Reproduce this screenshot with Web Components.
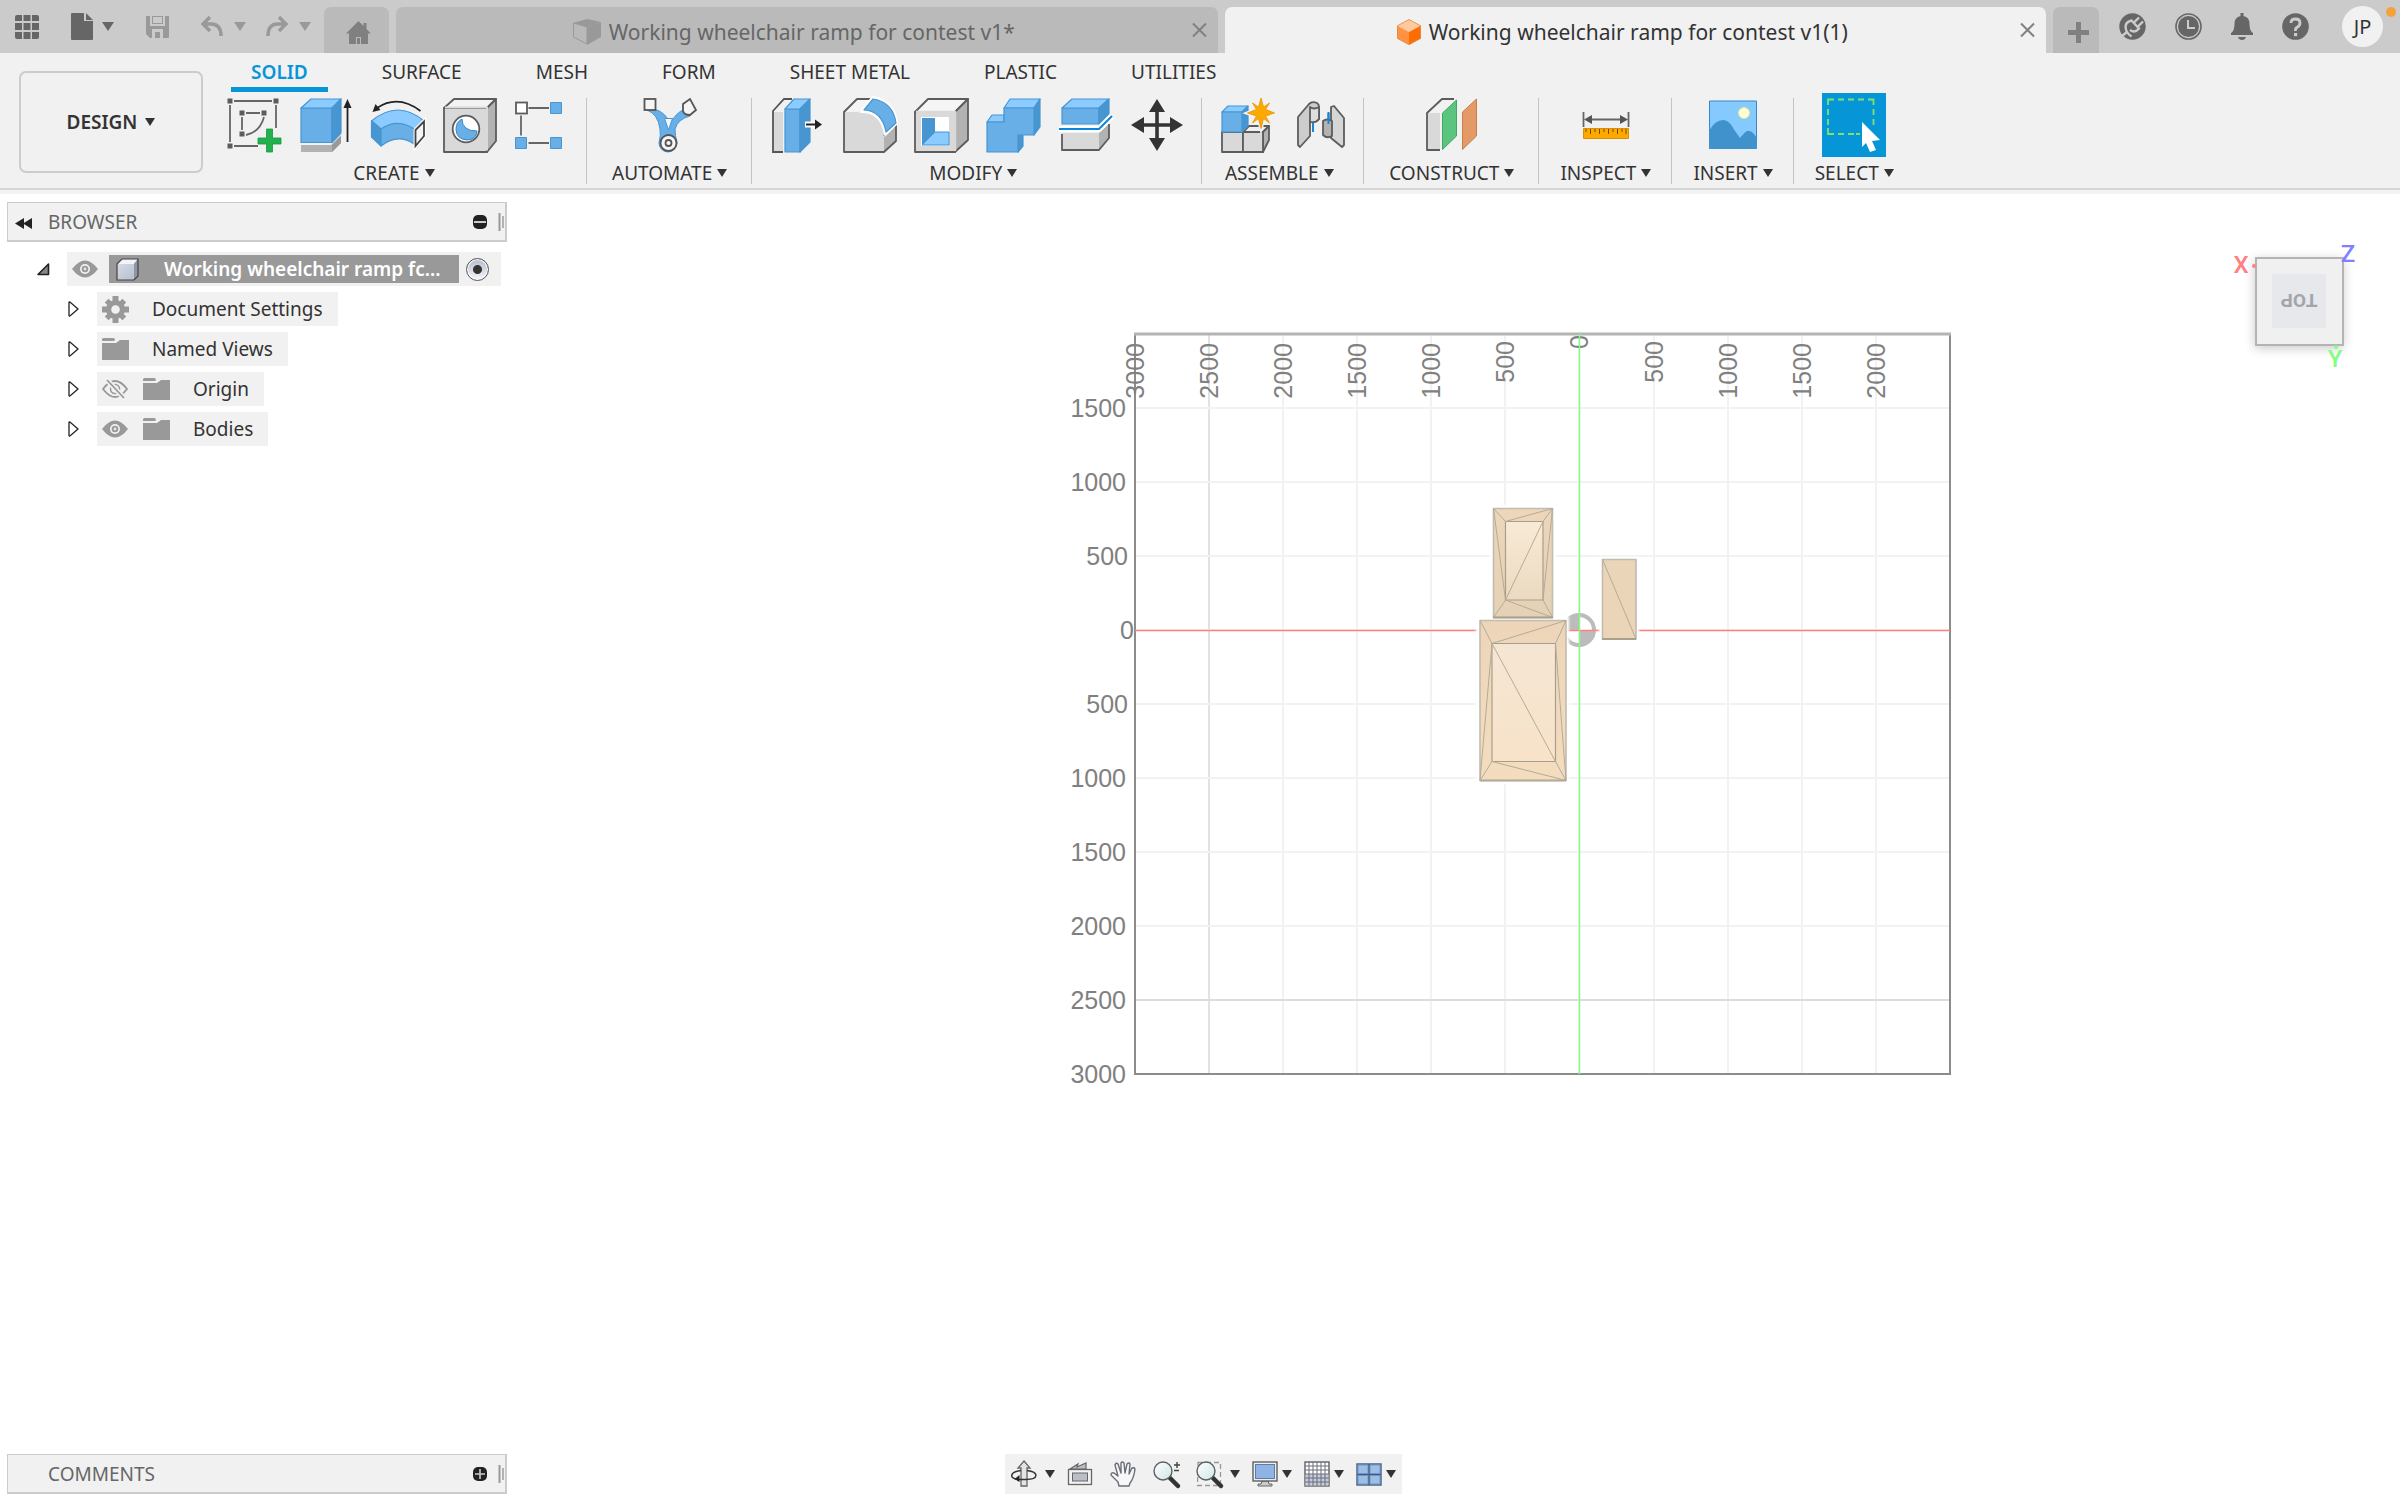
<!DOCTYPE html>
<html lang="en">
<head>
<meta charset="utf-8">
<title>Working wheelchair ramp for contest v1(1)</title>
<style>
  html, body { margin: 0; height: 100%; }
  body { background: #fff; color: #333; font-family: "Noto Sans", "Open Sans", sans-serif; font-size: 19px; }
</style>
</head>
<body>
<app-shell></app-shell>
<script>
/* ---------- shared helpers ---------- */
const BASE = `
  *, *::before, *::after { box-sizing: border-box; }
  button { font: inherit; color: inherit; background: none; border: 0; padding: 0; margin: 0; display: inline-flex; align-items: center; white-space: nowrap; }
  svg { display: block; flex: none; }
`;
function define(name, css, html, setup) {
  customElements.define(name, class extends HTMLElement {
    constructor() {
      super();
      this.attachShadow({ mode: "open" });
    }
    connectedCallback() {
      if (this.shadowRoot.childNodes.length) return;
      const body = typeof html === "function" ? html(this) : html;
      this.shadowRoot.innerHTML = `<style>${BASE}${css}</style>${body}`;
      if (setup) setup(this);
    }
  });
}

/* ---------- icons: [width, height, markup] ---------- */
const L = "#8ccbff", M = "#67afe6", D = "#4795d1", E = "#3a86c4";
const blueEdge = `stroke="${D}" stroke-width="1.2" stroke-linejoin="round"`;
const grayEdge = `stroke="#5c5c5c" stroke-width="1.8" stroke-linejoin="round"`;
const eye = `<path d="M0 9Q13-8 26 9Q13 26 0 9z" fill="#999"/><circle cx="13" cy="9" r="5" fill="#f1f1f1"/><circle cx="13" cy="9" r="3.3" fill="#999"/><circle cx="13" cy="9" r="1.4" fill="#e8e8e8"/>`;
const lens = (x) => `<path d="M${x + 15} 16l9 9" stroke="#333" stroke-width="4.5" stroke-linecap="round"/><circle cx="${x + 9}" cy="10" r="9" fill="url(#lg)" stroke="#5b6068" stroke-width="1.4"/>`;
const lensGrad = `<defs><linearGradient id="lg" x1="0" y1="0" x2="1" y2="1"><stop offset="0" stop-color="#fff"/><stop offset="1" stop-color="#cfe6e6"/></linearGradient></defs>`;
const bluePane = (x, y) => `<rect x="${x}" y="${y}" width="10" height="8.5" fill="#9dbfe6" stroke="#6f97cc"/>`;
const ICONS = {
  apps: [24, 24, `<path fill="#666" d="M2 0h5v6H0V2q0-2 2-2zM8.5 0h7v6h-7zM17 0h5q2 0 2 2v4h-7zM0 8h7v7H0zM8.5 8h7v7h-7zM17 8h7v7h-7zM0 17h7v7H2q-2 0-2-2zM8.5 17h7v7h-7zM17 17h7v5q0 2-2 2h-5z"/>`],
  file: [22, 27, `<path fill="#666" d="M1 0h12v8h9v18q0 1-1 1H1q-1 0-1-1V1q0-1 1-1zM15 0l7 7h-7z"/>`],
  save: [23, 24, `<path fill="#999" fill-rule="evenodd" d="M0 1h4v10h15V1h4v21q0 1-1 1H4l-4-4zM6 1h11v8H6zM7 2v6h9V2zM6 14h11v9h-3v-6H9v6H6z"/><path fill="#999" d="M10 18h3v5h-3z"/>`],
  undo: [22, 21, `<path d="M9 1L2 8l7 7M2 8h8q10 0 10 12" fill="none" stroke="#999" stroke-width="3.4"/>`],
  redo: [22, 21, `<path d="M13 1l7 7-7 7M20 8h-8Q2 8 2 20" fill="none" stroke="#999" stroke-width="3.4"/>`],
  home: [25, 23, `<path fill="#808080" fill-rule="evenodd" d="M12.500 0l5 5V2h3v6l4.500 4.500h-3V23H15v-7h-5v7H3V12.500H0zM11 17h3v6h-3z"/>`],
  cubeGray: [28, 26, `<path fill="#999" d="M0 4L14 0l14 3-14 5z"/><path fill="#b9b9b9" stroke="#999" d="M.5 4L14 8v17L.5 18z"/><path fill="#999" d="M14 8l14-5v15L14 26z"/>`],
  cubeOrange: [24, 26, `<path fill="#ffc9a0" d="M12 0l12 6.500L12 13 0 6.500z"/><path fill="#ff9343" d="M0 6.500L12 13v13L0 19.500z"/><path fill="#ff6d00" d="M24 6.500L12 13v13l12-6.500z"/><path fill="none" stroke="#e58a4a" stroke-width=".8" d="M12 .5l11.500 6.300v12.600L12 25.500.5 19.400V6.800z"/>`],
  close: [15, 14, `<path d="M1 .5l13 13M14 .5l-13 13" stroke="#808080" stroke-width="2"/>`],
  plus: [21, 21, `<path fill="#808080" d="M8 0h5v8h8v5h-8v8H8v-8H0V8h8z"/>`],
  plug: [27, 27, `<circle cx="13.500" cy="13.500" r="13.200" fill="#666"/><path d="M3 23q3-2 4.500-4M12.500 23.500Q7 20 6.500 14q0-5 6-6.500l7.500 8q-4 5-9 1.500M14 10.500l6-6M18 14.500l6-6" fill="none" stroke="#ccc" stroke-width="2.400"/>`],
  clock: [27, 27, `<circle cx="13.500" cy="13.500" r="12.500" fill="none" stroke="#666" stroke-width="1.600"/><circle cx="13.500" cy="13.500" r="10.500" fill="#666"/><path d="M13 7v8h7" fill="none" stroke="#ccc" stroke-width="2"/>`],
  bell: [22, 27, `<path fill="#666" d="M9.500 0h3v3q6 1 6 8 0 7 3.500 9v2H0v-2q3.500-2 3.500-9 0-7 6-8zM7 24h8q-1 3-4 3t-4-3z"/>`],
  help: [27, 27, `<circle cx="13.500" cy="13.500" r="13.300" fill="#666"/><path d="M9 10q0-4 4.500-4T18 10q0 2.500-2.500 4t-2 4" fill="none" stroke="#ccc" stroke-width="2.800"/><path fill="#ccc" d="M12 20h3.200v3.200H12z"/>`],
  caret: [12, 9, `<path fill="currentColor" d="M0 0h12L6 9z"/>`],
  caretSmall: [10, 8, `<path fill="#333" d="M0 0h10L5 8z"/>`],

  sketch: [72, 64, `<path d="M16 8h38M12 12v37M58 12v23M16 53h24M28 20h14M24 24v13" stroke="#666" stroke-width="1.800"/><path d="M46 24q-4 15-18 18" fill="none" stroke="#666" stroke-width="1.800"/><path fill="#5c5c5c" d="M9.500 5.500h5v5h-5zM55.500 5.500h5v5h-5zM9.500 50.500h5v5h-5zM21.500 17.500h5v5h-5zM43.500 17.500h5v5h-5zM21.500 38.500h5v5h-5z"/><path fill="#23b14d" stroke="#129a3c" stroke-width=".8" d="M48.500 36h6v9H63v6h-8.500v8h-6v-8H40v-6h8.500z"/>`],
  extrude: [72, 64, `<path fill="#b2b2b2" d="M11 52h30l10-10v8l-9 9H11z"/><path fill="#999" d="M42 52l9-9v7l-9 9z"/><g ${blueEdge}><path fill="${M}" d="M11 15h31v34.500H11z"/><path fill="${L}" d="M11 15l10-9h30l-9 9z"/><path fill="${D}" d="M42 15l9-9v34l-9 9.500z"/></g><path d="M57.500 14v35" stroke="#222" stroke-width="1.800"/><path fill="#222" d="M57.500 6l4 9h-8z"/>`],
  revolve: [72, 64, `<g ${blueEdge}><path fill="${L}" d="M9.500 28Q36 6 62 28L53 37Q36 24 19 36z"/><path fill="${D}" d="M9.500 28L19 36v17l-9.500-9z"/><path fill="${M}" d="M19 36q17-11 33 0v15q-16-11-33 2z"/></g><path d="M53.500 37l8.500-8.500V43l-8.500 10z" fill="#f7f7f7" stroke="#fff" stroke-width="4"/><path d="M53.500 37l8.500-8.500V43l-8.500 10z" fill="#f5f5f5" stroke="#444" stroke-width="1.800"/><path d="M58.500 18Q36 1 15 15" fill="none" stroke="#222" stroke-width="1.800"/><path fill="#222" d="M10.500 19l3-8 5 6z"/>`],
  hole: [72, 64, `<g ${grayEdge}><path fill="#d9d9d9" d="M10 15h43v44H10z"/><path fill="#f3f3f3" d="M10 15l10-9h42l-9 9z" /><path fill="#b2b2b2" d="M53 15l9-9v42l-9 11z"/></g><path d="M11 14.500h42v43" fill="none" stroke="#d9d9d9" stroke-width="2"/><circle cx="32" cy="36" r="13.300" fill="#fff" stroke="#5c5c5c" stroke-width="1.800"/><path d="M28 26q0 12 15 12-1 9-10 9-11-1-11-11 0-7 6-10z" fill="${M}" stroke="${E}"/>`],
  pattern: [72, 64, `<path d="M22.500 15H43M15 22.500v20M22.500 50H43" stroke="#666" stroke-width="1.800"/><rect x="10" y="9.500" width="11" height="11" fill="#fff" stroke="#5c5c5c" stroke-width="1.800"/><g fill="${M}" stroke="${D}"><path d="M44.500 9.500h11v11h-11zM9.500 44.500h11v11h-11zM44.500 44.500h11v11h-11z"/></g>`],
  automate: [72, 64, `<path d="M17 16q10 0 17 10h5q7-10 15-10l2 7q-12 3-15 13 0 6 2 14a9 9 0 0 1-18 0q2-8 1-14Q24 21 13 17z" fill="${M}" stroke="${D}"/><path d="M30.500 25.500h8L34.500 37z" fill="#f5f5f5" stroke="${D}"/><rect x="10.500" y="6" width="11" height="11" fill="#f5f5f5" stroke="#555" stroke-width="1.800"/><path d="M49 11l7-5 6 11-6 5q-6 0-7-4z" fill="#f5f5f5" stroke="#555" stroke-width="1.800"/><circle cx="34.500" cy="50" r="8" fill="#f5f5f5" stroke="#555" stroke-width="1.800"/><circle cx="34.500" cy="50" r="3" fill="#f5f5f5" stroke="#555" stroke-width="1.800"/>`],
  pressPull: [72, 64, `<path fill="#d9d9d9" d="M12 19h10v40H12z"/><path d="M22 59H12V18L23 6h8" fill="none" stroke="#555" stroke-width="1.800"/><g ${blueEdge}><path fill="${M}" d="M24 16h15v43H24z"/><path fill="${L}" d="M24 16l9-10h16l-10 10z"/><path fill="${D}" d="M39 16L49 6v43L39 59z"/></g><path d="M44 31.500h12" stroke="#fff" stroke-width="6"/><path d="M45 31.500h11" stroke="#222" stroke-width="2"/><path fill="#222" d="M61 31.500l-7-5v10z"/>`],
  fillet: [72, 64, `<path d="M11 19h19q17 2 21 23v17H11z" fill="#d9d9d9"/><path d="M11 19L24 6h13l-8 12z" fill="#f5f5f5"/><path d="M51 42l12-12v18L51 59z" fill="#b2b2b2"/><path d="M39 6H24L11 19v40h40l12-11V31L51 43" fill="none" ${grayEdge}/><path d="M30 18L40 5q20 3 23 25L53 40Q50 19 30 18z" fill="${M}" stroke="#fff" stroke-width="4"/><path d="M31 17l9-11q20 3 23 24l-10 9Q49 18 31 17z" fill="${M}" ${blueEdge}/>`],
  shell: [72, 64, `<g ${grayEdge}><path fill="#f5f5f5" d="M10 19L23 6h40L50 19z"/><path fill="#b2b2b2" d="M50 19L63 6v41L50 59z"/><path fill="#d9d9d9" d="M10 19h40v40H10z"/></g><path d="M11 19h39v39" fill="none" stroke="#d9d9d9" stroke-width="2.400"/><path fill="#fff" d="M16 24h28v29H16z"/><path fill="${D}" d="M17 25h13v14L17 52z"/><path fill="${L}" stroke="${D}" d="M17 52l13-13h14v13z"/>`],
  combine: [72, 64, `<g ${blueEdge}><path fill="${L}" d="M27 15l6-9h30l-6 9zM10 29l5-7h12v7z"/><path fill="${D}" d="M57 15l6-9v28l-6 8zM41 42h5v11l-5 6z"/><path fill="${M}" d="M10 29h17V15h30v27H41v17H10z"/></g>`],
  split: [72, 64, `<g ${blueEdge}><path fill="${M}" d="M13 15h37v16H13z"/><path fill="${L}" d="M13 15l10-9h37l-10 9z"/><path fill="${D}" d="M50 15l10-9v15L50 31z"/></g><path fill="#d9d9d9" d="M13 40h37v17H13z"/><path fill="#b2b2b2" d="M50 40l10-9v14l-10 12z"/><path d="M13 41v16h37l10-12V31" fill="none" ${grayEdge}/><path d="M10 36h40l13-13" fill="none" stroke="#fff" stroke-width="6"/><path d="M10 36h40l13-13" fill="none" stroke="#0b86dc" stroke-width="2"/>`],
  move: [72, 64, `<path d="M36 14v36M18 32h36" stroke="#333" stroke-width="3.600"/><path fill="#333" d="M36 6l8 13H28zM36 58l8-13H28zM10 32l13-8v16zM62 32l-13-8v16z"/>`],
  component: [72, 64, `<g ${grayEdge}><path fill="#d9d9d9" d="M11 39h21v20H11z"/><path fill="#f0f0f0" d="M32 39l6-6h20l-6 6z"/><path fill="#b2b2b2" d="M52 39l6-6v14l-6 12z"/><path fill="#d9d9d9" d="M32 39h20v20H32z"/></g><g ${blueEdge}><path fill="${L}" d="M11 19l6-6h20l-6 6z"/><path fill="${D}" d="M31 19l6-6v20l-6 6z"/><path fill="${M}" d="M11 19h20v20H11z"/></g><path d="M50 6l2.500 8 6-4-4 6.500 8.500 3.500-8.500 3 4 7-6-4.500-2.500 9-2.500-9-6 4.500 4-7-8.500-3 8.500-3.500-4-6.500 6 4z" fill="#ffa800" stroke="#f1f1f1" stroke-width="4"/><path d="M50 5l2.500 9 6-4-4 6.500 9 3.500-9 3 4 7-6-4.500-2.500 10-2.500-10-6 4.500 4-7-9-3 9-3.500-4-6.500 6 4z" fill="#ffa800" stroke="#e59400" stroke-width=".8"/>`],
  joint: [72, 64, `<path d="M30 26v13M45.500 20v12" stroke="#1a86d8" stroke-width="2"/><g ${grayEdge}><path fill="#ccc" d="M15 24L26 11q3-3 8-1 2 1 2 4v12q-3 4-9 3v14L17 54l-2-2z"/><path fill="#ddd" d="M27 14q4 3 9 0v12q-3 4-9 3z"/><path fill="#d6d6d6" d="M48 14l3-1 10 12v27l-2 2-11-9z"/><path fill="#b2b2b2" d="M40 28q4-3 9 0v15q-5 3-9-1z"/></g><path d="M45.500 19v12" stroke="#1a86d8" stroke-width="2"/>`],
  plane: [72, 64, `<path fill="#d9d9d9" d="M11 20h13v37H11z"/><path d="M24 57H11V20L26 6h12" fill="none" ${grayEdge}/><path fill="#5bc47f" stroke="#3fa863" d="M26.500 20l14-13v36l-14 13.500z"/><path fill="#e39a66" stroke="#c97f4c" d="M46.500 19l14-13v37l-14 13.500z"/>`],
  measure: [72, 64, `<path d="M13.500 19v15M58.500 19v15M18 26.500h36" stroke="#666" stroke-width="1.800"/><path fill="#555" d="M14 26.500l8-4.500v9zM58 26.500l-8-4.500v9z"/><path fill="#ffa800" stroke="#d98f00" d="M13.500 35.500h45v10h-45z"/><path d="M16 36v3M20.500 36v5M25 36v3M29.500 36v5M34 36v3M38.500 36v5M43 36v3M47.500 36v5M52 36v3M56 36v5" stroke="#6b4a00" stroke-width="1"/>`],
  image: [72, 64, `<path fill="#85caff" stroke="${E}" d="M12.500 8h47v47h-47z"/><circle cx="47" cy="20" r="5.500" fill="#fffcd6" stroke="#e2e6a0"/><path fill="#3f92cc" d="M12 38q6-11 14-11 6 0 10 8l7 10q7-9 9-7 4 0 8 8v10H12z"/>`],
  select: [72, 64, `<path fill="#0696d7" d="M4 0h64v64H4z"/><path d="M10 12V6.500h6M20 6.500h6M30 6.500h6M40 6.500h6M50 6.500h5.500V12M55.500 16v6M55.500 26v6M10 16v6M10 26v6M10 35v6h6M20 41h6M30 41h6M38 41h4" fill="none" stroke="#7be36e" stroke-width="1.800"/><path fill="#fff" d="M44 29l18 18-8 1 4 9-6 2-4-9-4 4z"/>`],

  rewind: [17, 11, `<path fill="#222" d="M9 0v11L0 5.500zM17 0v11L8 5.500z"/>`],
  minus: [14, 14, `<rect width="14" height="14" rx="5" fill="#222"/><path d="M1 7h12" stroke="#ccc" stroke-width="2"/>`],
  add: [14, 14, `<rect width="14" height="14" rx="5" fill="#222"/><path d="M2 7h10M7 2v10" stroke="#ccc" stroke-width="1.600"/>`],
  grip: [6, 18, `<path d="M1.500 0v18" stroke="#999" stroke-width="2"/><path d="M5 3v12" stroke="#777"/>`],
  open: [12, 12, `<path d="M11.500 1v10.500H1z" fill="#888" stroke="#222" stroke-width="1.600" stroke-linejoin="round"/>`],
  closed: [11, 16, `<path d="M1 1.500q0-1 1.500 0L10 8l-7.500 6.500Q1 15.500 1 14.500z" fill="#fff" stroke="#222" stroke-width="1.300"/>`],
  eye: [26, 18, eye],
  eyeOff: [26, 18, `<path d="M1 9Q13-7 25 9Q13 25 1 9z" fill="none" stroke="#999" stroke-width="1.800"/><circle cx="13" cy="9" r="4.500" fill="none" stroke="#999" stroke-width="1.600"/><circle cx="13" cy="9" r="1.500" fill="#999"/><path d="M5 0l17 18" stroke="#f1f1f1" stroke-width="5"/><path d="M5 0l17 18" stroke="#999" stroke-width="1.800"/>`],
  gear: [27, 27, `<g fill="#999"><circle cx="13.500" cy="13.500" r="9.500"/><path d="M10.500 0h6v27h-6z"/><path d="M0 10.500h27v6H0z"/><path d="M10.800 1h5.400v25h-5.400z" transform="rotate(45 13.500 13.500)"/><path d="M10.800 1h5.400v25h-5.400z" transform="rotate(-45 13.500 13.500)"/></g><circle cx="13.500" cy="13.500" r="4.300" fill="#f1f1f1"/>`],
  folder: [27, 22, `<path fill="#999" d="M0 1.500Q0 0 1.500 0H11q2 0 2 1.500T11 3H0zM0 5h14l4-3h9v20H0z"/>`],
  body: [23, 23, `<defs><linearGradient id="b" x1="0" y1="0" x2="1" y2="1"><stop offset="0" stop-color="#d6dbe6"/><stop offset="1" stop-color="#b7bfce"/></linearGradient></defs><path fill="#f2f4f8" d="M1 6l5-5h16l-4 5z"/><path fill="#8d96a6" d="M18 6l4-5v17l-4 4z"/><path fill="url(#b)" d="M1 6h17v16H1z"/><path fill="none" stroke="#444" stroke-width="1.200" d="M1 6l5-5h16v17l-4 4H1z"/>`],

  orbit: [26, 26, `<path d="M13 0l6 7h-3v18h-6V7H7z" fill="#e2e4e8" stroke="#666" stroke-width="1.300"/><path d="M10 9.500C-2 11-2 18 8 18.500M16 9.500c12 1.500 12 9-1 9H8" fill="none" stroke="#333" stroke-width="1.500"/><path fill="#222" d="M3.500 18l5-4v7z"/>`],
  look: [26, 26, `<path d="M3 8l8-5-1 3 9-4v6z" fill="#b9bec8" stroke="#666" stroke-width="1.200"/><rect x="1.500" y="8.500" width="23" height="15" fill="#f3f3f3" stroke="#666" stroke-width="1.300"/><rect x="5.500" y="12" width="15" height="8" fill="#b9bec8" stroke="#666"/>`],
  hand: [26, 26, `<path d="M8 21L1 14q0-3 3-2l4 3L5 4q1-3 3-1l3 9V2q1-2 3 0l1 10 2-9q2-2 3 0l-1 10 3-6q2-1 3 1-1 9-5 14l-1 3H9z" fill="#f7f7f8" stroke="#6a6e78" stroke-width="1.400" stroke-linejoin="round"/>`],
  zoom: [26, 26, `${lensGrad}${lens(1)}<path d="M21 4h6M24 1v6M21 9.500h5" stroke="#444" stroke-width="1.400"/>`],
  fit: [26, 26, `${lensGrad}<path d="M2 1.500h22.500v23H1.500z" fill="none" stroke="#999" stroke-width="1.300" stroke-dasharray="5 3"/>${lens(1)}`],
  display: [26, 26, `<path d="M10 20h6l1 3h3v2H6v-2h3z" fill="#ccc" stroke="#666"/><rect x="1" y="1" width="24" height="19" fill="#eee" stroke="#555" stroke-width="1.300"/><rect x="3.500" y="3.500" width="19" height="14" fill="#8fb4e3" stroke="#5b7db0"/>`],
  grid: [26, 26, `<rect x="1" y="1" width="24" height="24" fill="#fff" stroke="#555" stroke-width="1.300"/><path fill="#c4cbdc" d="M1.500 13h23v11.500h-23z"/><path d="M5 1v24M9 1v24M13 1v24M17 1v24M21 1v24M1 5h24M1 9h24M1 13h24M1 17h24M1 21h24" stroke="#6a6e78" stroke-width="1"/>`],
  views: [26, 26, `<rect x="1" y="3" width="24" height="21" fill="#8fb4e3" stroke="#46597a" stroke-width="1.400"/>${bluePane(2, 4)}${bluePane(14, 4)}${bluePane(2, 14.5)}${bluePane(14, 14.5)}<path d="M13 3v21M1 13.500h24" stroke="#46597a" stroke-width="1.200"/>`]
};
define("ui-icon", `:host { display: inline-flex; flex: none; }`, el => {
  const [w, h, body] = ICONS[el.getAttribute("name")];
  return `<svg width="${w}" height="${h}" viewBox="0 0 ${w} ${h}" overflow="visible" aria-hidden="true">${body}</svg>`;
});

/* ---------- title bar ---------- */
define("doc-tab", `
  :host { flex: 1; min-width: 0; display: flex; align-items: center; height: 46px; padding-right: 11px; border-radius: 7px 7px 0 0; background: #bababa; color: #666; font-size: 21px; }
  :host([active]) { background: #f1f1f1; color: #333; }
  .name { flex: 1; justify-content: center; gap: 8px; height: 100%; padding-top: 3px; }
`, el => `
  <button class="name" role="tab"><ui-icon name="${el.getAttribute("icon")}"></ui-icon><slot></slot></button>
  <button aria-label="Close"><ui-icon name="close"></ui-icon></button>
`);
define("title-bar", `
  :host { display: flex; height: 53px; background: #cbcbcb; }
  .quick { display: flex; align-items: center; width: 324px; padding-left: 15px; }
  .quick button { color: #666; }
  .quick .file { margin-left: 32px; gap: 9px; }
  .quick .save { margin-left: 32px; }
  .quick .step { margin-left: 32px; gap: 11px; color: #999; }
  .quick .step + .step { margin-left: 20px; }
  .tabs { flex: 1; min-width: 0; display: flex; align-items: flex-end; gap: 7px; }
  .home, .new { justify-content: center; height: 46px; padding: 4px 0 0 4px; border-radius: 7px 7px 0 0; background: #bababa; }
  .home { width: 65px; }
  .new { width: 46px; }
  .right { display: flex; align-items: center; width: 301px; padding-left: 20px; gap: 29px; }
  .avatar { position: relative; width: 41px; height: 41px; border-radius: 50%; background: #f1f1f1; justify-content: center; font-size: 20px; margin-left: 4px; }
  .avatar::after { content: ""; position: absolute; right: -13px; top: 1px; width: 10px; height: 10px; border-radius: 50%; background: #f4a13c; }
`, `
  <div class="quick">
    <button aria-label="Show data panel"><ui-icon name="apps"></ui-icon></button>
    <button class="file" aria-label="File"><ui-icon name="file"></ui-icon><ui-icon name="caret"></ui-icon></button>
    <button class="save" aria-label="Save"><ui-icon name="save"></ui-icon></button>
    <button class="step" aria-label="Undo"><ui-icon name="undo"></ui-icon><ui-icon name="caret"></ui-icon></button>
    <button class="step" aria-label="Redo"><ui-icon name="redo"></ui-icon><ui-icon name="caret"></ui-icon></button>
  </div>
  <div class="tabs">
    <button class="home" aria-label="Home"><ui-icon name="home"></ui-icon></button>
    <doc-tab icon="cubeGray">Working wheelchair ramp for contest v1*</doc-tab>
    <doc-tab icon="cubeOrange" active>Working wheelchair ramp for contest v1(1)</doc-tab>
    <button class="new" aria-label="New design"><ui-icon name="plus"></ui-icon></button>
  </div>
  <div class="right">
    <button aria-label="Extensions"><ui-icon name="plug"></ui-icon></button>
    <button aria-label="Job status"><ui-icon name="clock"></ui-icon></button>
    <button aria-label="Notifications"><ui-icon name="bell"></ui-icon></button>
    <button aria-label="Help"><ui-icon name="help"></ui-icon></button>
    <button class="avatar">JP</button>
  </div>
`);

/* ---------- ribbon ---------- */
define("tool-group", `
  :host { position: relative; display: flex; flex-direction: column; align-items: center; padding: 0 9px; }
  :host(:not(:last-of-type))::after { content: ""; position: absolute; right: 0; top: 5px; width: 1px; height: 86px; background: #c4c4c4; }
  .tools { display: flex; }
  .menu { height: 32px; padding: 0 12px; gap: 5px; line-height: 32px; }
  :host([roomy]) .menu { padding: 0 16px; }
  :host([wide]) .menu { margin-right: 8px; }
`, el => `
  <div class="tools">${el.getAttribute("tools").split(" ").map(t => `<button aria-label="${t}"><ui-icon name="${t}"></ui-icon></button>`).join("")}</div>
  <button class="menu"><slot></slot><ui-icon name="caretSmall"></ui-icon></button>
`);
define("ribbon-bar", `
  :host { display: flex; height: 141px; background: #f1f1f1; border-bottom: 4px solid #f3f3f3; box-shadow: inset 0 -2px #d6d6d6; }
  .workspace { width: 184px; height: 102px; margin: 18px 6px 0 19px; border: 2px solid #ccc; border-radius: 7px; justify-content: center; gap: 8px; font-weight: 600; }
  .body { flex: 1; min-width: 0; }
  .tabs { display: flex; gap: 34px; height: 40px; padding-left: 22px; }
  .tabs button { height: 39px; padding: 4px 20px 0; border-bottom: 5px solid transparent; }
  .tabs button[aria-selected=true] { color: #0696d7; font-weight: 600; border-color: #0696d7; }
  .groups { display: flex; }
`, `
  <button class="workspace">DESIGN <ui-icon name="caretSmall"></ui-icon></button>
  <div class="body">
    <div class="tabs" role="tablist">
      <button role="tab" aria-selected="true">SOLID</button>
      <button role="tab">SURFACE</button>
      <button role="tab">MESH</button>
      <button role="tab">FORM</button>
      <button role="tab">SHEET METAL</button>
      <button role="tab">PLASTIC</button>
      <button role="tab">UTILITIES</button>
    </div>
    <div class="groups">
      <tool-group wide tools="sketch extrude revolve hole pattern">CREATE</tool-group>
      <tool-group roomy tools="automate">AUTOMATE</tool-group>
      <tool-group wide tools="pressPull fillet shell combine split move">MODIFY</tool-group>
      <tool-group wide tools="component joint">ASSEMBLE</tool-group>
      <tool-group roomy tools="plane">CONSTRUCT</tool-group>
      <tool-group tools="measure">INSPECT</tool-group>
      <tool-group tools="image">INSERT</tool-group>
      <tool-group tools="select">SELECT</tool-group>
    </div>
  </div>
`);

/* ---------- browser tree ---------- */
define("panel-header", `
  :host { display: flex; align-items: center; height: 40px; width: 500px; padding: 0 1px 0 7px; background: #f1f1f1; border: 1px solid #ccc; border-bottom-width: 2px; border-right-width: 2px; color: #666; }
  .lead { width: 33px; }
  .title { flex: 1; }
  .grip { margin-left: 11px; }
`, el => `
  <span class="lead">${el.hasAttribute("collapsible") ? `<button aria-label="Collapse"><ui-icon name="rewind"></ui-icon></button>` : ""}</span>
  <span class="title"><slot></slot></span>
  <button aria-label="Toggle panel"><ui-icon name="${el.getAttribute("action")}"></ui-icon></button>
  <ui-icon class="grip" name="grip"></ui-icon>
`);
define("tree-row", `
  :host { display: flex; align-items: center; height: 34px; padding-left: 61px; gap: 18px; color: #333; }
  .chip { display: flex; align-items: center; height: 34px; padding: 0 15px 0 5px; background: #f1f1f1; }
  .eye { margin-right: 15px; }
  .text { margin-left: 23px; white-space: nowrap; }
`, el => `
  <button aria-label="Expand"><ui-icon name="closed"></ui-icon></button>
  <div class="chip">
    ${el.hasAttribute("eye") ? `<button class="eye" aria-label="Visibility"><ui-icon name="${el.getAttribute("eye")}"></ui-icon></button>` : ""}
    <ui-icon name="${el.getAttribute("icon")}"></ui-icon>
    <span class="text"><slot></slot></span>
  </div>
`);
define("tree-root", `
  :host { display: flex; align-items: center; height: 34px; width: 494px; padding-left: 30px; gap: 18px; }
  .chip { flex: 1; min-width: 0; display: flex; align-items: center; height: 34px; padding: 0 12px 0 5px; background: #f1f1f1; }
  .name { flex: 1; min-width: 0; display: flex; align-items: center; height: 28px; margin: 0 7px 0 11px; padding-left: 7px; background: #999; color: #fff; font-weight: 600; }
  .text { flex: 1; min-width: 0; margin-left: 25px; line-height: 28px; white-space: nowrap; overflow: hidden; }
  input { appearance: none; width: 23px; height: 23px; margin: 0; border: 1px solid #555; border-radius: 50%; background: radial-gradient(circle, #333 0 4px, transparent 5px), linear-gradient(#b4bccb, #f4f6fa); box-shadow: inset 0 0 0 1px #fff; }
`, `
  <button aria-label="Collapse"><ui-icon name="open"></ui-icon></button>
  <div class="chip">
    <button aria-label="Visibility"><ui-icon name="eye"></ui-icon></button>
    <div class="name"><ui-icon name="body"></ui-icon><span class="text"><slot></slot></span></div>
    <input type="radio" checked aria-label="Activate component">
  </div>
`);
define("browser-panel", `
  :host { display: flex; flex-direction: column; gap: 6px; }
  tree-root { margin-top: 4px; }
`, `
  <panel-header collapsible action="minus">BROWSER</panel-header>
  <tree-root>Working wheelchair ramp fc...</tree-root>
  <tree-row icon="gear">Document Settings</tree-row>
  <tree-row icon="folder">Named Views</tree-row>
  <tree-row eye="eyeOff" icon="folder">Origin</tree-row>
  <tree-row eye="eye" icon="folder">Bodies</tree-row>
`);

/* ---------- model canvas ---------- */
const X0 = 1135, Y0 = 334, STEP = 74;
const column = i => X0 + STEP * i + (i > 6 ? 1 : 0);
function gridMarkup() {
  let out = "";
  for (let i = 1; i < 11; i++) {
    out += `<path d="M${column(i)} 334V1074" stroke="${i === 1 ? "#e2e2e2" : "#f2f2f2"}" stroke-width="2"/>`;
  }
  for (let i = 1; i < 10; i++) {
    out += `<path d="M1135 ${Y0 + STEP * i}H1950" stroke="${i === 9 ? "#dcdcdc" : "#f2f2f2"}" stroke-width="2"/>`;
  }
  return out;
}
function labelMarkup() {
  let out = "";
  ["3000", "2500", "2000", "1500", "1000", "500", "0", "500", "1000", "1500", "2000"].forEach((t, i) => {
    const top = t === "0" ? 335 : t.length === 3 ? 341 : 343;
    out += `<text transform="translate(${column(i) + 9} ${top}) rotate(-90)" text-anchor="end">${t}</text>`;
  });
  ["1500", "1000", "500", "0", "500", "1000", "1500", "2000", "2500", "3000"].forEach((t, i) => {
    const right = t === "0" ? 1134 : t.length === 3 ? 1128 : 1126;
    out += `<text x="${right}" y="${Y0 + STEP * (i + 1) + 9}" text-anchor="end">${t}</text>`;
  });
  return out;
}
define("model-canvas", `
  :host { display: block; min-width: 0; min-height: 0; overflow: hidden; }
  svg { width: 100%; height: 100%; }
  text { font: 25px "Liberation Sans", Arial, sans-serif; fill: #808080; }
`, () => `
  <svg viewBox="0 194 2400 1309" preserveAspectRatio="xMidYMid slice" role="img" aria-label="Top view of the model">
    <defs>
      <linearGradient id="in1" x1="0" y1="0" x2="0" y2="1"><stop offset="0" stop-color="#f9ead6"/><stop offset="1" stop-color="#ebdac0"/></linearGradient>
      <linearGradient id="in2" x1="0" y1="0" x2="0" y2="1"><stop offset="0" stop-color="#f5e6d3"/><stop offset="1" stop-color="#f8e3c9"/></linearGradient>
      <linearGradient id="o1" x1="0" y1="0" x2="0" y2="1"><stop offset="0" stop-color="#edd6ba"/><stop offset="1" stop-color="#e5d1b5"/></linearGradient>
      <linearGradient id="o2" x1="0" y1="0" x2="0" y2="1"><stop offset="0" stop-color="#edd5b9"/><stop offset="1" stop-color="#f4dcbf"/></linearGradient>
      <filter id="halo" x="-20%" y="-20%" width="140%" height="140%"><feGaussianBlur stdDeviation="1"/></filter>
    </defs>
    ${gridMarkup()}
    <path d="M1135 334V1074H1950V334" fill="none" stroke="#8c8c8c" stroke-width="2"/>
    <path d="M1134 334H1951" stroke="#b4b4b4" stroke-width="3"/>
    ${labelMarkup()}
    <circle cx="1579" cy="630" r="15" fill="#fff" stroke="#bcbcbc" stroke-width="4"/>
    <path d="M1579 630V615a15 15 0 0 0-15 15zM1579 630V645a15 15 0 0 0 15-15z" fill="#bcbcbc"/>
    <path d="M1135 630.500H1950" stroke="#ff8080" stroke-width="1.500"/>
    <path d="M1579.500 334V1074" stroke="#80ff80" stroke-width="1.500"/>
    <g fill="#fff" filter="url(#halo)"><path d="M1490 505h66v116h-66zM1476 617h93v167h-93zM1599 557h40v85h-40z"/></g>
    <g stroke="#b5ab99" stroke-width="1" stroke-linejoin="round" fill="none">
      <path d="M1493.500 508.500h59v109h-59z" fill="url(#o1)" stroke="#c2bbb0" stroke-width="1.600"/>
      <path d="M1505.500 521.500h37.500v78.500h-37.500z" fill="url(#in1)" stroke="#a89e8e" stroke-width="1.200"/>
      <path d="M1493.500 508.500l12 13L1552.500 508.500 1543 521.500M1493.500 508.500l12 91.500L1552.500 617.500 1543 600M1493.500 617.500l12-17.500L1543 521.500M1552.500 508.500L1543 600"/>
      <path d="M1493 617.500h60" stroke="#aaa18a" stroke-width="2"/>
      <path d="M1480 620.500h86v160h-86z" fill="url(#o2)" stroke="#c2bbb0" stroke-width="1.600"/>
      <path d="M1492 643.500h63.500v118H1492z" fill="url(#in2)" stroke="#a89e8e" stroke-width="1.200"/>
      <path d="M1480 620.500l12 23 74-23-10.500 23 10.500 137-10.500-19L1492 643.500l-12 137 12-19 74 19"/>
      <path d="M1480 780.500h86" stroke="#b5ab98" stroke-width="2"/>
      <path d="M1602.500 559.500h33.500v79.500h-33.500z" fill="#ebd5b9" stroke="#c2bbb0" stroke-width="1.600"/>
      <path d="M1602.500 559.500l33.500 79.500"/>
      <path d="M1602 639h34" stroke="#aaa18a" stroke-width="2"/>
    </g>
  </svg>
`);

/* ---------- view cube ---------- */
define("view-cube", `
  :host { display: block; width: 140px; height: 140px; }
  text { font: 700 19px Roboto, "Liberation Sans", sans-serif; text-anchor: middle; }
  .axis { font-size: 24px; font-weight: 500; }
`, `
  <svg width="140" height="140" viewBox="2225 238 140 140" overflow="visible" role="img" aria-label="View cube">
    <defs><filter id="s" x="-30%" y="-30%" width="160%" height="160%"><feGaussianBlur stdDeviation="6"/></filter></defs>
    <rect x="2255" y="260" width="88" height="88" fill="#000" opacity=".22" filter="url(#s)"/>
    <rect x="2256" y="258" width="87" height="87" fill="#f0f0f0" stroke="#b4b4b4" stroke-width="2"/>
    <rect x="2272" y="274" width="54" height="54" fill="#e6e8ec"/>
    <text transform="translate(2299 294) rotate(180)" fill="#a2a6ac">TOP</text>
    <circle cx="2254" cy="266" r="2" fill="#ff8080"/>
    <text class="axis" x="2241" y="273" fill="#ff8080">X</text>
    <text class="axis" x="2348" y="262" fill="#8080ff">Z</text>
    <circle cx="2336" cy="347" r="2" fill="#80ff80"/>
    <text class="axis" x="2335" y="367" fill="#80ff80">Y</text>
  </svg>
`);

/* ---------- navigation bar ---------- */
define("nav-bar", `
  :host { display: flex; align-items: center; height: 40px; padding: 0 6px; background: #f1f1f1; gap: 17px; }
  button { gap: 4px; }
  .wide { gap: 8px; }
  .drops { display: flex; gap: 12px; }
`, `
  <div class="drops">
    <button class="wide" aria-label="Orbit"><ui-icon name="orbit"></ui-icon><ui-icon name="caretSmall"></ui-icon></button>
    <button aria-label="Look at"><ui-icon name="look"></ui-icon></button>
  </div>
  <button aria-label="Pan"><ui-icon name="hand"></ui-icon></button>
  <button aria-label="Zoom"><ui-icon name="zoom"></ui-icon></button>
  <div class="drops">
    <button class="wide" aria-label="Fit"><ui-icon name="fit"></ui-icon><ui-icon name="caretSmall"></ui-icon></button>
    <button aria-label="Display settings"><ui-icon name="display"></ui-icon><ui-icon name="caretSmall"></ui-icon></button>
    <button aria-label="Grid and snaps"><ui-icon name="grid"></ui-icon><ui-icon name="caretSmall"></ui-icon></button>
    <button aria-label="Viewports"><ui-icon name="views"></ui-icon><ui-icon name="caretSmall"></ui-icon></button>
  </div>
`);

/* ---------- shell ---------- */
define("app-shell", `
  :host { display: flex; flex-direction: column; height: 100vh; }
  .work { flex: 1; min-height: 0; display: grid; grid-template: minmax(0, 1fr) / minmax(0, 1fr); }
  .work > * { grid-area: 1 / 1; }
  .over { display: flex; flex-direction: column; justify-content: space-between; padding: 8px 35px 9px 7px; }
  .top { display: flex; justify-content: space-between; align-items: flex-start; }
  view-cube { margin-top: 36px; }
  .bottom { display: grid; grid-template-columns: 1fr auto 1fr; align-items: end; margin-right: -34px; }
`, `
  <title-bar></title-bar>
  <ribbon-bar></ribbon-bar>
  <div class="work">
    <model-canvas></model-canvas>
    <div class="over">
      <div class="top"><browser-panel></browser-panel><view-cube></view-cube></div>
      <div class="bottom"><panel-header action="add">COMMENTS</panel-header><nav-bar></nav-bar></div>
    </div>
  </div>
`);
</script>
</body>
</html>
